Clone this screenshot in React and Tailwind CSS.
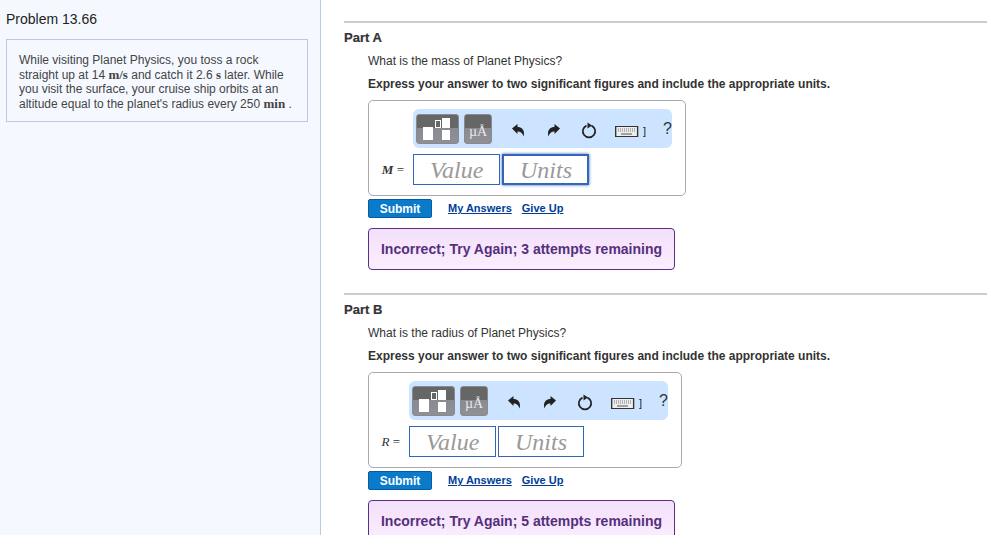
const Unit = ({ children }) => <span className="font-['Liberation_Serif',serif] font-bold text-[13px]">{children}</span>

function Templates() {
  return (
    <div className="relative w-[44px] h-[30px] rounded-[3px] border border-[#8a8a8a] bg-[linear-gradient(#666_0,#666_46%,#8a8a92_46%,#8f8f98_100%)]">
      <span className="absolute left-[6px] top-[12px] w-[10px] h-[13px] bg-white" />
      <span className="absolute left-[18px] top-[5px] w-[6px] h-[8px] border border-white" />
      <span className="absolute left-[25px] top-[3px] w-[8px] h-[10px] bg-white" />
      <span className="absolute left-[25px] top-[15px] w-[8px] h-[10px] bg-white" />
    </div>
  )
}

function Symbols() {
  return (
    <div className="w-[28px] h-[30px] rounded-[3px] border border-[#8a8a8a] bg-[linear-gradient(#666_0,#666_46%,#8a8a92_46%,#8f8f98_100%)] flex items-end justify-center pb-[3px] text-[#e8e8e8] font-['Liberation_Serif',serif] text-[14px] leading-[16px]">
      µÅ
    </div>
  )
}

function ArrowIcon({ flip }) {
  return (
    <svg width="14" height="14" viewBox="0 0 14 14" className={flip ? "-scale-x-100" : ""}>
      <path d="M1 5.5 6.5 1v3c4 0 6.5 2.500 6.500 6.500 0 1-.2 2-.7 3-.3-3-2.300-5-5.800-5V11Z" fill="#222" />
    </svg>
  )
}

function ResetIcon() {
  return (
    <svg width="16" height="17" viewBox="0 0 16 17" fill="none">
      <path d="M10.500 3.600a6.200 6.200 0 1 1-5 0" stroke="#222" strokeWidth="1.700" />
      <path d="M6.500 0.500v6l4.500-3Z" fill="#222" />
    </svg>
  )
}

function KeyboardIcon() {
  return (
    <svg width="24" height="11" viewBox="0 0 24 11">
      <rect x="0.500" y="0.500" width="16" height="10" fill="#eee" stroke="#333" transform="scale(1.370 1)" />
      <path d="M3 3h17M3 5h17" stroke="#777" strokeWidth="1.200" strokeDasharray="1 1" />
      <path d="M6 8h11" stroke="#555" />
    </svg>
  )
}

function Toolbar() {
  return (
    <div className="w-[259px] h-[39px] rounded-[6px] bg-[#cce4ff] flex items-center pl-[3px]">
      <Templates />
      <div className="ml-[5px]"><Symbols /></div>
      <div className="ml-[19px] mt-[3px]"><ArrowIcon /></div>
      <div className="ml-[22px] mt-[3px]"><ArrowIcon flip /></div>
      <div className="ml-[20px] mt-[3px]"><ResetIcon /></div>
      <div className="ml-[18px] mt-[5px] flex items-center gap-[4px]">
        <KeyboardIcon />
        <span className="text-[11px] text-[#222] leading-none">]</span>
      </div>
      <span className="ml-[17px] text-[16px] text-[#333] leading-none">?</span>
    </div>
  )
}

function AnswerField({ label, width, focus }) {
  return (
    <div className={`h-[31px] border border-[#3366bb] flex items-center justify-start bg-white font-['Liberation_Serif',serif] italic text-[24px] text-[#999] ${width} ${focus}`}>
      <span className="pl-[16px]">{label}</span>
    </div>
  )
}

function Part({ title, question, symbol, boxWidth, labelWidth, unitsWidth, unitsFocus, attempts, topMargin, valueFocus }) {
  return (
    <section className={topMargin}>
      <div className="h-[2px] bg-[#ccc]" />
      <h2 className="mt-[7px] text-[13px] leading-[15px] font-semibold text-[#333] [-webkit-text-stroke:0.2px_#333]">{title}</h2>
      <div className="ml-[24px]">
        <p className="mt-[9px] text-[12px] leading-[14px] text-[#333]">{question}</p>
        <p className="mt-[9px] text-[12px] leading-[14px] font-bold text-[#333]">Express your answer to two significant figures and include the appropriate units.</p>
        <div className={`mt-[9px] h-[96px] rounded-[5px] border border-[#aaa] flex flex-col pt-[8px] pl-[${0}px] ${boxWidth}`}>
          <div className={labelWidth === 45 ? "ml-[44px]" : "ml-[40px]"}><Toolbar /></div>
          <div className={`mt-[6px] flex items-center ${labelWidth === 45 ? "" : ""}`}>
            <span className={`text-right text-[13px] text-[#333] font-['Liberation_Serif',serif] ${labelWidth === 45 ? "w-[35px]" : "w-[31px]"}`}>
              <i className={labelWidth === 45 ? "font-bold" : ""}>{symbol}</i> =
            </span>
            <div className={`flex gap-[2px] ${labelWidth === 45 ? "ml-[9px]" : "ml-[9px]"}`}>
              <AnswerField label="Value" width="w-[87px]" focus={valueFocus} />
              <AnswerField label="Units" width={unitsWidth} focus={unitsFocus} />
            </div>
          </div>
        </div>
        <div className="mt-[3px] flex items-center">
          <button className="w-[64px] h-[19px] rounded-[2px] border border-[#0a5c9e] bg-[#0a7acb] text-white text-[12px] font-bold leading-none">Submit</button>
          <a className="ml-[16px] text-[11px] font-semibold text-[#003d99] underline">My Answers</a>
          <a className="ml-[10px] text-[11px] font-semibold text-[#003d99] underline">Give Up</a>
        </div>
        <div className="mt-[10px] w-[307px] h-[42px] rounded-[4px] border border-[#5c2d86] bg-[linear-gradient(#f3dffc,#fbeeff)] flex items-center justify-center text-[14px] font-bold text-[#55307a]">
          Incorrect; Try Again; {attempts} attempts remaining
        </div>
      </div>
    </section>
  )
}

export default function App() {
  return (
    <div className="w-[987px] h-[535px] overflow-hidden flex bg-white font-['Liberation_Sans',Arial,sans-serif]">
      <aside className="w-[321px] shrink-0 border-r border-[#b9cbe0] bg-[#f5f9ff] pl-[6px] pr-[12px]">
        <h1 className="mt-[11px] text-[14px] leading-[16px] text-[#222]">Problem 13.66</h1>
        <div className="mt-[12px] h-[83px] border border-[#b9cbe0] px-[12px] pt-[13px] text-[12px] leading-[14.500px] text-[#444]">
          While visiting Planet Physics, you toss a rock straight up at 14 <Unit>m/s</Unit> and catch it 2.6 <Unit>s</Unit> later. While you visit the surface, your cruise ship orbits at an altitude equal to the planet's radius every 250 <Unit>min</Unit> .
        </div>
      </aside>
      <main className="flex-1 pl-[23px] pt-[21px]">
        <Part title="Part A" question="What is the mass of Planet Physics?" symbol="M" boxWidth="w-[318px]" labelWidth={45} unitsWidth="w-[87px]" unitsFocus="border-2 shadow-[0_0_3px_#3366bb]" attempts={3} />
        <Part title="Part B" question="What is the radius of Planet Physics?" symbol="R" boxWidth="w-[314px]" labelWidth={41} unitsWidth="w-[86px]" attempts={5} topMargin="mt-[23px]" />
      </main>
    </div>
  )
}
